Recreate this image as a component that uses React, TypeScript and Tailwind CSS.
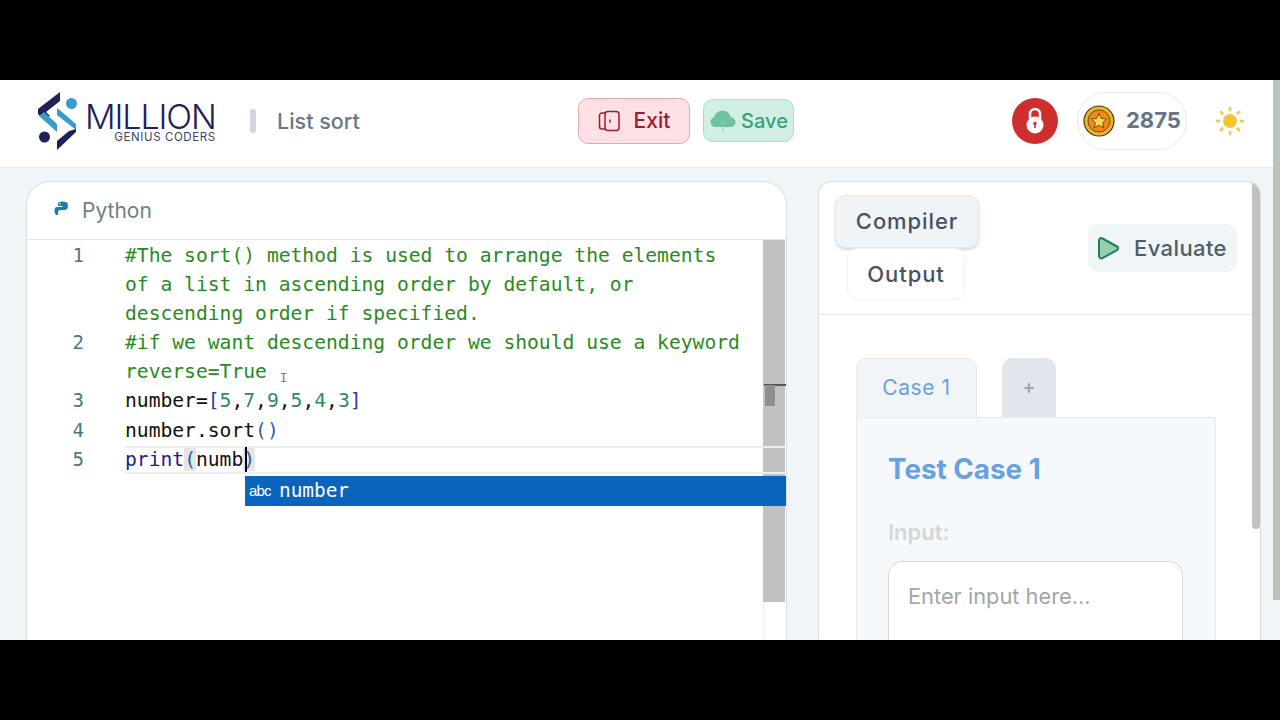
import React from 'react'

const UI_FONT = "font-['Inter','Noto_Sans',sans-serif]"

const Logo = () => (
  <div className="flex items-center w-[186px] h-[66px] shrink-0">
    <svg width="60" height="66" viewBox="0 0 60 66" className="shrink-0 -ml-[1px]">
      <polygon points="31,4 31,13 17,24 21,28 14,31 9,26 9,21" fill="#1e2257" />
      <polygon points="10,28 15,24 28,36 28,44" fill="#3a9ccb" />
      <polygon points="28,20 33,24 47,36 47,42 28,27" fill="#3a9ccb" />
      <polygon points="47,41 47,44 28,62 28,53 40,43" fill="#1e2257" />
      <circle cx="42.5" cy="15.5" r="5.5" fill="#3a9ccb" />
      <circle cx="15.5" cy="49" r="5.5" fill="#1e2257" />
    </svg>
    <div className="flex flex-col items-end -ml-[4px] mt-[4px]">
      <span className="font-['Inter',sans-serif] font-light text-[34px] leading-[28px] tracking-[-1.1px] text-[#1e2257]">MILLION</span>
      <span className="font-['Inter',sans-serif] font-normal text-[11.500px] leading-[12px] tracking-[0.6px] text-[#3d4566]">GENIUS CODERS</span>
    </div>
  </div>
)

const DoorIcon = () => (
  <svg width="22" height="22" viewBox="0 0 22 22" fill="none" stroke="#9b1c2e" strokeWidth="1.5" strokeLinecap="round">
    <path d="M7 3H4a2.500 2.500 0 0 0-2.500 2.500v11A2.500 2.500 0 0 0 4 19h3" />
    <rect x="7" y="1.500" width="14" height="19" rx="3" />
    <line x1="12" y1="10" x2="12" y2="12" />
  </svg>
)

const LockIcon = () => (
  <svg width="18" height="27" viewBox="0 0 18 27">
    <path d="M4 12V7a5 5 0 0 1 10 0v5" fill="none" stroke="#fff" strokeWidth="2.500" />
    <circle cx="9" cy="18" r="8.500" fill="#fff" />
    <circle cx="9" cy="16.500" r="1.700" fill="#cf2e2e" />
    <rect x="8.200" y="17" width="1.600" height="4" fill="#cf2e2e" />
  </svg>
)

const CoinIcon = () => (
  <svg width="32" height="32" viewBox="0 0 32 32">
    <circle cx="16" cy="16" r="15" fill="#e9b32a" stroke="#4a3a10" strokeWidth="1.2" />
    <circle cx="16" cy="16" r="11" fill="#ee8a17" stroke="#6b4a10" strokeWidth="1" />
    <polygon
      points="16,8.5 18.3,13.4 23.6,14 19.7,17.7 20.8,23 16,20.3 11.2,23 12.3,17.7 8.4,14 13.7,13.4"
      fill="#fbd84a"
      stroke="#6b4a10"
      strokeWidth="1"
      strokeLinejoin="round"
    />
  </svg>
)

const SunIcon = () => (
  <svg width="30" height="30" viewBox="0 0 30 30">
    <circle cx="15" cy="15" r="7" fill="#f5c534" />
    <g stroke="#efcb66" strokeWidth="3" strokeLinecap="round">
      <line x1="15" y1="2" x2="15" y2="4" />
      <line x1="15" y1="26" x2="15" y2="28" />
      <line x1="2" y1="15" x2="4" y2="15" />
      <line x1="26" y1="15" x2="28" y2="15" />
      <line x1="6" y1="6" x2="7.3" y2="7.3" />
      <line x1="22.7" y1="22.7" x2="24" y2="24" />
      <line x1="6" y1="24" x2="7.3" y2="22.7" />
      <line x1="22.7" y1="7.3" x2="24" y2="6" />
    </g>
  </svg>
)

const PythonIcon = () => (
  <svg width="15" height="17" viewBox="0 0 15 17" className="-mt-[3px]">
    <path d="M7.500 0.500C5.300 0.500 4 1.400 4 3v2h4.500v1H3C1.300 6 0.500 7.400 0.500 9.500c0 1.900.4 3.200 1.700 4.500h1.800v-2.500C4 10 5 9 6.500 9h4.300c1.700 0 3-1.200 3-3V3c0-1.600-2-2.500-6.300-2.500z" fill="#1c7ea8" />
    <circle cx="6" cy="3" r=".8" fill="#fff" />
  </svg>
)

const SaveIcon = () => (
  <svg width="28" height="27" viewBox="0 0 28 27">
    <path d="M7 20c-3.300 0-5.500-2.100-5.500-5 0-2.500 1.600-4.300 3.800-4.800C6 6.500 9.500 3.500 13.500 3.500c4 0 7.300 2.800 8.100 6.400 2.700.4 4.900 2.500 4.900 5.100 0 2.900-2.300 5-5.200 5z" fill="#6fc3a0" />
    <path d="M14 26V14M10.500 17.500 14 14l3.500 3.500" fill="none" stroke="#8fcfb4" strokeWidth="1" />
  </svg>
)

const PlayIcon = () => (
  <svg width="26" height="26" viewBox="0 0 26 26">
    <path d="M3 5.500c0-2 1.900-3 3.500-2l14.500 8c1.500.8 1.500 2.800 0 3.600l-14.500 8c-1.600.9-3.500-.1-3.500-2z" fill="#97cdb0" stroke="#1d8058" strokeWidth="2" strokeLinejoin="round" />
  </svg>
)

const Comment = ({ children }: { children: React.ReactNode }) => (
  <span className="text-[#2a8a1e]">{children}</span>
)

const codeLines: { num?: number; content: React.ReactNode }[] = [
  { num: 1, content: <Comment>#The sort() method is used to arrange the elements</Comment> },
  { content: <Comment>of a list in ascending order by default, or</Comment> },
  { content: <Comment>descending order if specified.</Comment> },
  { num: 2, content: <Comment>#if we want descending order we should use a keyword</Comment> },
  { content: <Comment>reverse=True</Comment> },
  {
    num: 3,
    content: (
      <>
        <span className="text-[#111]">number=</span>
        <span className="text-[#2b3f9a]">[</span>
        <span className="text-[#2a8a6a]">5</span>,<span className="text-[#2a8a6a]">7</span>,
        <span className="text-[#2a8a6a]">9</span>,<span className="text-[#2a8a6a]">5</span>,
        <span className="text-[#2a8a6a]">4</span>,<span className="text-[#2a8a6a]">3</span>
        <span className="text-[#2b3f9a]">]</span>
      </>
    ),
  },
  {
    num: 4,
    content: (
      <>
        number.sort<span className="text-[#2b5fb0]">()</span>
      </>
    ),
  },
  {
    num: 5,
    content: (
      <>
        <span className="text-[#1c1c8c]">print</span>
        <span className="bg-[#e4e6e6] text-[#2b5fb0]">(</span>numb
        <span className="bg-[#e4e6e6] text-[#2b5fb0]">)</span>
      </>
    ),
  },
]

const Editor = () => (
  <div className="relative flex-1 min-h-0 flex">
    <div className="flex-1 pt-[0.500px] font-['DejaVu_Sans_Mono',monospace] text-[19.650px] text-[#111]">
      {codeLines.map((line, i) => (
        <div key={i} className="flex h-[29.2px] leading-[29.2px] whitespace-pre">
          <span className="w-[98px] pr-[41px] text-right text-[19px] text-[#3f7a85] shrink-0">{line.num}</span>
          <span>{line.content}</span>
        </div>
      ))}
    </div>
    {/* scrollbar + overview ruler */}
    <div className="w-[23px] shrink-0 border-l border-[#eeeeee]">
      <div className="w-[22px] h-[362px] -ml-[1px] bg-[#c1c1c1]" />
    </div>

    {/* current line highlight */}
    <div className="absolute left-[98px] right-0 top-[206px] h-[28px] border-y-2 border-[#eeeeee]" />
    <div className="absolute left-[218px] top-[207px] w-[2px] h-[25px] bg-black" />
    <div className="absolute left-[737px] top-[144px] w-[22px] h-[2px] bg-[#555]" />
    <div className="absolute left-[738px] top-[145px] w-[10px] h-[21px] bg-[#8f8f8f]" />
    <div className="absolute left-[253px] top-[131px] text-[#777] text-[12px] leading-[14px] font-['DejaVu_Sans_Mono',monospace]">I</div>

    {/* suggestion popup */}
    <div className="absolute left-[218px] right-0 top-[236px] h-[30px] bg-[#0a63bd] flex items-center text-white">
      <span className="w-[34px] pl-[4px] text-[15px] tracking-[-0.8px] font-['Liberation_Sans',sans-serif]">abc</span>
      <span className="font-['DejaVu_Sans_Mono',monospace] text-[19.400px]">number</span>
    </div>
  </div>
)

const Header = () => (
  <header className={`h-[87px] shrink-0 bg-white flex items-center pl-[30px] pr-[28px] pb-[6px] ${UI_FONT}`}>
    <Logo />
    <div className="w-[6px] h-[24px] rounded-full bg-[#d0d6de] ml-[34px]" />
    <span className="ml-[21px] pt-[1px] text-[21.500px] font-medium text-[#6b7688] w-[301px]">List sort</span>
    <button className="flex items-center justify-center gap-[14px] w-[112px] h-[46px] rounded-[10px] bg-[#fde0e3] border border-[#e4aab2] text-[#9b1c2e] text-[21px] font-medium">
      <DoorIcon />
      Exit
    </button>
    <button className="ml-[13px] flex items-center justify-center gap-[4px] w-[91px] h-[43px] rounded-[10px] bg-[#d1f0e3] border border-[#aadcc6] text-[#35a27a] text-[20px] font-medium">
      <SaveIcon />
      Save
    </button>
    <div className="ml-auto w-[46px] h-[46px] rounded-full bg-[#cf2e2e] flex items-center justify-center">
      <LockIcon />
    </div>
    <div className="ml-[19px] w-[110px] h-[58px] rounded-full border border-[#e6e9ed] flex items-center pl-[5px] gap-[11px]">
      <CoinIcon />
      <span className="text-[22px] font-bold text-[#667488]">2875</span>
    </div>
    <div className="ml-[28px]">
      <SunIcon />
    </div>
  </header>
)

const LeftCard = () => (
  <section className="w-[761px] h-full shrink-0 bg-white border border-b-0 border-[#d8dfe4] rounded-t-[24px] flex flex-col overflow-hidden">
    <div className="h-[58px] shrink-0 border-b border-[#e5e7eb] flex items-center pl-[27px] gap-[13px]">
      <PythonIcon />
      <span className={`text-[21px] text-[#6f7f88] ${UI_FONT}`}>Python</span>
    </div>
    <Editor />
  </section>
)

const RightCard = () => (
  <section className={`relative w-[443px] h-full shrink-0 bg-white border border-b-0 border-[#d8dfe4] rounded-t-[14px] overflow-hidden ${UI_FONT}`}>
    <div className="h-[133px] border-b border-[#e5e7eb] mr-[8px] flex items-start pt-[13px] pl-[16px]">
      <div className="flex flex-col items-center">
        <button className="w-[144px] h-[53px] rounded-[10px] bg-[#f0f4f7] border border-[#e4e8ec] shadow-[0_2px_3px_rgba(0,0,0,0.15)] text-[22px] tracking-[0.9px] font-medium text-[#48525f]">Compiler</button>
        <button className="w-[118px] h-[52px] -ml-[2px] rounded-[10px] bg-white border border-[#f0f2f4] text-[22px] tracking-[0.9px] font-medium text-[#48525f]">Output</button>
      </div>
      <button className="ml-[109px] mt-[29px] w-[149px] h-[48px] rounded-[10px] bg-[#f0f5f7] flex items-center pl-[8px] gap-[12px] text-[22px] tracking-[0.4px] font-medium text-[#515c6b]">
        <PlayIcon />
        Evaluate
      </button>
    </div>
    <div className="pl-[37px] pt-[43px]">
      <div className="flex items-end gap-[25px] h-[59px]">
        <div className="w-[121px] h-[59px] rounded-t-[10px] bg-[#f1f5f8] border border-b-0 border-[#e6eaee] flex items-center justify-center text-[21px] tracking-[0.6px] text-[#6d9fd8]">Case 1</div>
        <div className="w-[54px] h-[59px] pb-[1px] rounded-t-[10px] bg-[#e1e6ed] flex items-center justify-center text-[19px] font-semibold text-[#9ba3ae]">+</div>
      </div>
      <div className="w-[360px] h-[300px] bg-[#f6f9fb] border border-[#e6eaee] pl-[31px] pt-[32px]">
        <h2 className="text-[27.800px] leading-[38px] font-bold text-[#68a0e0]">Test Case 1</h2>
        <div className="mt-[29px] text-[22px] leading-[30px] font-semibold text-[#d4d7da]">Input:</div>
        <div className="mt-[14px] w-[295px] h-[120px] bg-white border border-[#d5dadf] rounded-[14px] pl-[19px] pt-[19px] text-[21.800px] leading-[30px] text-[#a2a6aa]">Enter input here...</div>
      </div>
    </div>
    {/* inner scrollbar */}
    <div className="absolute right-0 top-0 w-[8px] h-[347px] bg-[#c1c1c1] rounded-b-[4px]" />
  </section>
)

export default function App() {
  return (
    <div className="h-screen bg-black overflow-hidden flex flex-col">
      <div className="h-[80px] shrink-0 bg-black" />
      <div className="h-[560px] shrink-0 flex overflow-hidden bg-[#f0f5f8]">
        <div className="flex-1 min-w-0 flex flex-col">
          <Header />
          <div className="h-[1px] shrink-0 bg-[#e8ecef]" />
          <div className="flex-1 min-h-0 flex pt-[13px] pl-[26px] gap-[31px]">
            <LeftCard />
            <RightCard />
          </div>
        </div>
        <div className="w-[7px] shrink-0 pb-[40px] bg-[#f0f5f8]">
          <div className="h-full bg-[#b9c4b9]" />
        </div>
      </div>
      <div className="h-[80px] shrink-0 bg-black" />
    </div>
  )
}
